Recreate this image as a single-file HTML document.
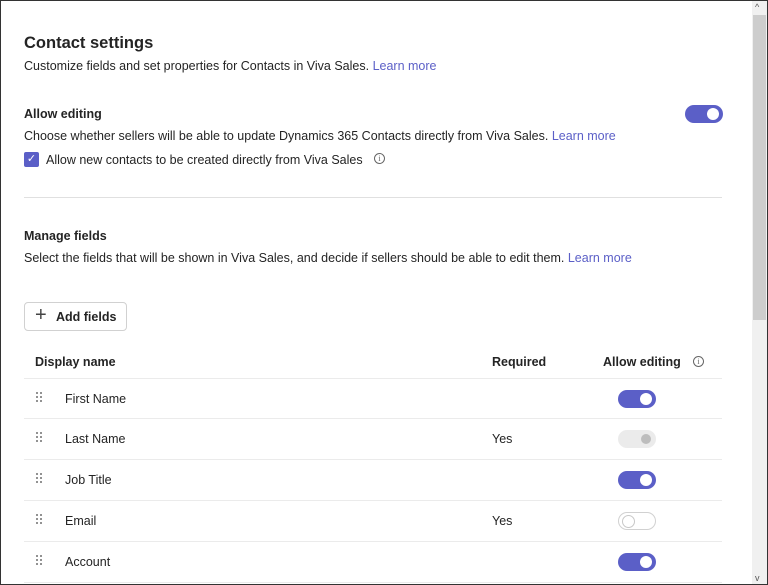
<!DOCTYPE html>
<html><head><style>
*{margin:0;padding:0;box-sizing:border-box}
body{width:768px;height:585px;overflow:hidden;background:#fff;font-family:"Liberation Sans",sans-serif;color:#242424;position:relative}
.frame{position:absolute;left:0;top:0;width:768px;height:585px;border:1px solid #333;}
.a{position:absolute;white-space:nowrap}
.t13{font-size:12.5px}
.link{color:#5b5fc7}
.b{font-weight:bold}
.tog{position:absolute;width:38px;height:18px;border-radius:9px;background:#5b5fc7}
.tog::after{content:"";position:absolute;right:4px;top:3px;width:12px;height:12px;border-radius:50%;background:#fff}
.dis{background:#ebebeb}
.dis::after{background:#bdbdbd;width:10px;height:10px;top:4px;right:5px}
.off{background:#fff;border:1px solid #d1d1d1}
.off::after{background:#fff;border:1px solid #c8c8c8;left:3px;right:auto;top:2px;width:11px;height:11px}
.line{position:absolute;left:24px;width:698px;height:1px;background:#ebebeb}
.grip{position:absolute;left:35px;width:7px;height:13px;background-image:radial-gradient(circle,#777 0.9px,transparent 1.1px);background-size:4px 4px;background-position:0 0}
.info{position:absolute;width:11px;height:11px;border:1px solid #666;border-radius:50%;font-size:8px;line-height:9px;text-align:center;color:#666;font-family:"Liberation Serif",serif}
</style></head><body>
<div class="a b" style="left:24px;top:34px;font-size:16.5px">Contact settings</div>
<div class="a t13" style="left:24px;top:59px">Customize fields and set properties for Contacts in Viva Sales. <span class="link">Learn more</span></div>
<div class="a t13 b" style="left:24px;top:107px;font-weight:600">Allow editing</div>
<div class="tog" style="left:685px;top:105px"></div>
<div class="a t13" style="left:24px;top:129px">Choose whether sellers will be able to update Dynamics 365 Contacts directly from Viva Sales. <span class="link">Learn more</span></div>
<div class="a" style="left:24px;top:152px;width:15px;height:15px;background:#5b5fc7;border-radius:2px;color:#fff;font-size:11px;text-align:center;line-height:15px">✓</div>
<div class="a t13" style="left:46px;top:153px">Allow new contacts to be created directly from Viva Sales</div>
<div class="info" style="left:374px;top:153px">i</div>
<div class="line" style="top:197px;background:#e0e0e0"></div>
<div class="a t13 b" style="left:24px;top:229px">Manage fields</div>
<div class="a t13" style="left:24px;top:251px">Select the fields that will be shown in Viva Sales, and decide if sellers should be able to edit them. <span class="link">Learn more</span></div>
<div class="a" style="left:24px;top:302px;width:103px;height:29px;border:1px solid #d1d1d1;border-radius:4px"></div>
<div class="a" style="left:35px;top:304px;font-size:20px;font-weight:300;color:#444">+</div>
<div class="a t13 b" style="left:56px;top:310px">Add fields</div>
<div class="a t13" style="left:35px;top:355px;font-weight:bold">Display name</div>
<div class="a t13" style="left:492px;top:355px;font-weight:bold">Required</div>
<div class="a t13" style="left:603px;top:355px;font-weight:bold">Allow editing</div>
<div class="info" style="left:693px;top:356px">i</div>
<div class="line" style="top:378px"></div>
<div class="grip" style="top:391px"></div><div class="a t13" style="left:65px;top:392px">First Name</div><div class="tog" style="left:618px;top:390px"></div>
<div class="line" style="top:418px"></div>
<div class="grip" style="top:431px"></div><div class="a t13" style="left:65px;top:432px">Last Name</div><div class="a t13" style="left:492px;top:432px">Yes</div><div class="tog dis" style="left:618px;top:430px"></div>
<div class="line" style="top:459px"></div>
<div class="grip" style="top:472px"></div><div class="a t13" style="left:65px;top:473px">Job Title</div><div class="tog" style="left:618px;top:471px"></div>
<div class="line" style="top:500px"></div>
<div class="grip" style="top:513px"></div><div class="a t13" style="left:65px;top:514px">Email</div><div class="a t13" style="left:492px;top:514px">Yes</div><div class="tog off" style="left:618px;top:512px"></div>
<div class="line" style="top:541px"></div>
<div class="grip" style="top:554px"></div><div class="a t13" style="left:65px;top:555px">Account</div><div class="tog" style="left:618px;top:553px"></div>
<div class="line" style="top:582px"></div>
<div class="a" style="left:752px;top:1px;width:15px;height:583px;background:#f0f0f0"></div>
<div class="a" style="left:753px;top:15px;width:13px;height:305px;background:#cdcdcd"></div>
<div class="a" style="left:755px;top:2px;font-size:9px;color:#555">^</div>
<div class="a" style="left:755px;top:573px;font-size:9px;color:#555">v</div>
<div class="frame"></div>
</body></html>
